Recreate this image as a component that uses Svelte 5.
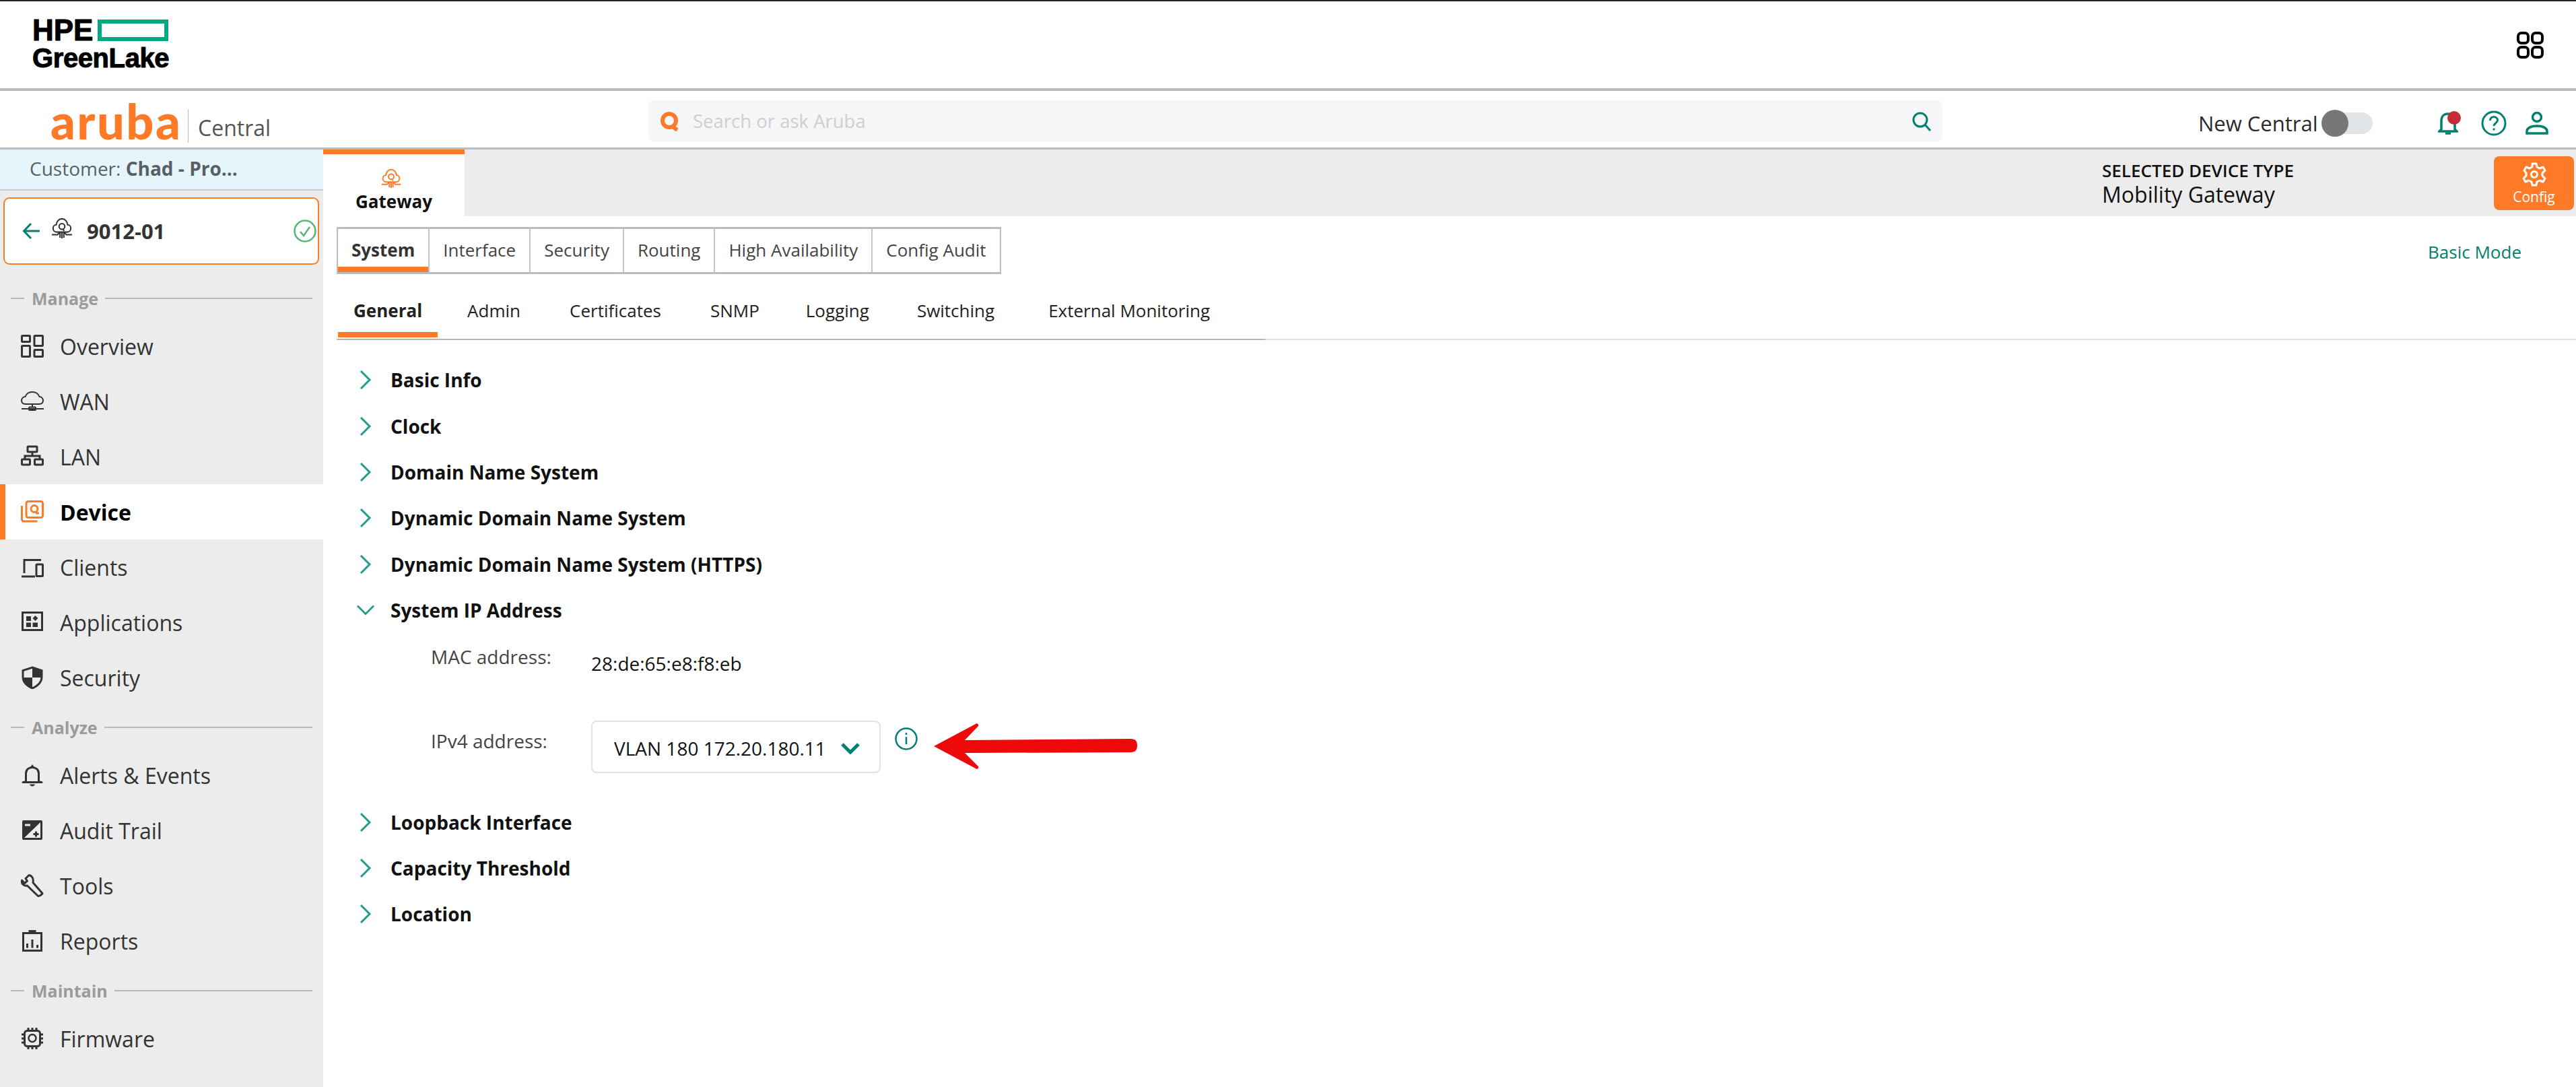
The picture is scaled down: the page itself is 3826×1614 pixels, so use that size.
<script>
  // stroke icons are drawn on a 34x34 box, colour comes from currentColor
  const nav = [
    { heading: 'Manage', items: [
      { label: 'Overview', icon: '<g fill="none" stroke="currentColor" stroke-width="3"><rect x="1.5" y="1.5" width="12" height="9" rx="1"/><rect x="20" y="1.5" width="12.5" height="15" rx="1"/><rect x="1.5" y="16.5" width="12" height="16" rx="1"/><rect x="20" y="22.5" width="12.5" height="10" rx="1"/></g>' },
      { label: 'WAN', icon: '<g fill="none" stroke="currentColor" stroke-width="2"><path d="M7 21C3 21 1 18.5 1 15.5S3.5 10 6.5 10C8 6 12 3 17 3s9 3 10.500 7c3 0 5.500 2.500 5.500 5.500S31 21 27 21Z"/><path d="M17 21v4M1 28h33"/><rect x="12" y="25.500" width="10" height="4.500" rx="1"/></g>' },
      { label: 'LAN', icon: '<g fill="none" stroke="currentColor" stroke-width="3"><rect x="10" y="2" width="14" height="8" rx="1"/><path d="M17 10v6M6 20v-4h22v4"/><rect x="1.500" y="21" width="12" height="8" rx="1"/><rect x="20.500" y="21" width="12" height="8" rx="1"/></g>' },
      { label: 'Device', active: true, icon: '<g fill="none" stroke="#ff7a26" stroke-width="3"><rect x="8" y="1.500" width="24.500" height="24" rx="3"/><circle cx="20" cy="12.500" r="5"/><path d="M22 19h5M1.500 8v20a3 3 0 0 0 3 3h20"/></g>' },
      { label: 'Clients', icon: '<g fill="none" stroke="currentColor" stroke-width="3"><path d="M5 26V6.500h25M1 31h20"/><rect x="23" y="13" width="9.500" height="17.500" rx="1"/></g>' },
      { label: 'Applications', icon: '<rect x="2.500" y="2.500" width="29" height="26" fill="none" stroke="currentColor" stroke-width="3"/><path fill="currentColor" d="M8 8h7v7H8zM8 17.500h7V24H8zM17.500 17.500H25V24h-7.500zM21.500 7l4 4-4 4-4-4z"/>' },
      { label: 'Security', icon: '<path fill="none" stroke="currentColor" stroke-width="3" d="M17 2 31 6.500V16c0 8-6 13.500-14 17C9 29.500 3 24 3 16V6.500Z"/><path fill="currentColor" d="M17 2 31 6.500V17H17ZM17 17H3c1 8 6 13 14 16Z"/>' }
    ] },
    { heading: 'Analyze', items: [
      { label: 'Alerts & Events', icon: '<path fill="none" stroke="currentColor" stroke-width="3" d="M7.500 26V14.500C7.500 9 11.500 5.500 17 5.500S26.500 9 26.500 14.500V26"/><path fill="none" stroke="currentColor" stroke-width="3" stroke-linecap="round" d="M3 27.500c2.500 0 4.500-1 4.500-3M31 27.500c-2.500 0-4.500-1-4.500-3M3 27.500h28"/><path fill="currentColor" d="M14 5l3-4 3 4zM13 30.500h8c0 1.500-2 3-4 3s-4-1.500-4-3z"/>' },
      { label: 'Audit Trail', icon: '<path fill="currentColor" fill-rule="evenodd" d="M4 2h26a2 2 0 0 1 2 2v25a2 2 0 0 1-2 2H4a2 2 0 0 1-2-2V4a2 2 0 0 1 2-2Zm25 3L5 28h24ZM6 7.500v3h8v-3Z"/><path stroke="currentColor" stroke-width="3" d="M22.500 18.500v8M18.500 22.500h8"/>' },
      { label: 'Tools', icon: '<path fill="none" stroke="currentColor" stroke-width="3" stroke-linejoin="round" d="M12 1.500 7 6.500l2.500 3.500-4 3.500L1.500 9C.500 14 4 18 9.500 17L25 32c2 1.500 6-1.500 7-3.500L18 12.500C19 7 17 2.500 12 1.500Z"/>' },
      { label: 'Reports', icon: '<path fill="none" stroke="currentColor" stroke-width="3" d="M3.500 5.500h27v26h-27ZM13 5.500V2.500h8v3"/><path fill="currentColor" d="M8 21h3v6.500H8zM15.500 15h3v12.500h-3zM23 23h3v4.500h-3z"/>' }
    ] },
    { heading: 'Maintain', items: [
      { label: 'Firmware', icon: '<rect x="5.500" y="5.500" width="23" height="23" rx="4" fill="none" stroke="currentColor" stroke-width="3"/><circle cx="17" cy="16.500" r="5.500" fill="none" stroke="currentColor" stroke-width="2.500"/><path stroke="currentColor" stroke-width="3" d="M11 1v4M17 1v4M23 1v4M11 29v4M17 29v4M23 29v4M1 11h4M1 17h4M1 23h4M29 11h4M29 17h4M29 23h4"/>' }
    ] }
  ];

  const subTabs = ['System', 'Interface', 'Security', 'Routing', 'High Availability', 'Config Audit'];
  const tabs = ['General', 'Admin', 'Certificates', 'SNMP', 'Logging', 'Switching', 'External Monitoring'];
  const sectionsBefore = ['Basic Info', 'Clock', 'Domain Name System', 'Dynamic Domain Name System', 'Dynamic Domain Name System (HTTPS)'];
  const sectionsAfter = ['Loopback Interface', 'Capacity Threshold', 'Location'];
</script>

{#snippet gatewayIcon(size)}
  <svg width={size} height={size} viewBox="0 0 34 34" fill="none" stroke="currentColor" stroke-width="2.200">
    <path d="M9 23C5 23 3 20 3 17s2-5.500 5-5.500C8.500 6.500 12 2 17 2s8.500 4.500 9 9.500c3 0 5 2.500 5 5.500s-2 6-6 6Z" />
    <circle cx="17" cy="14" r="4.500" />
    <path d="M19 19l1.500 2M14 23v9M17 23v10M20 23v9M1 27h9l3-3M33 27h-9l-3-3" />
  </svg>
{/snippet}

{#snippet chevronRight()}
  <svg class="chev" width="26" height="30" viewBox="0 0 26 30" fill="none" stroke="#1f9e8f" stroke-width="3"><path d="M6 2l13 13L6 28" /></svg>
{/snippet}

<div class="page">
  <header class="greenlake">
    <div class="hpe">
      <div class="hpe-top"><span>HPE</span><i class="hpe-box"></i></div>
      <div class="hpe-name">GreenLake</div>
    </div>
    <svg class="apps" width="40" height="40" viewBox="0 0 40 40" fill="none" stroke="#000" stroke-width="4">
      <rect x="2" y="2" width="15" height="15" rx="5" />
      <rect x="23" y="2" width="15" height="15" rx="5" />
      <rect x="2" y="23" width="15" height="15" rx="5" />
      <rect x="23" y="23" width="15" height="15" rx="5" />
    </svg>
  </header>

  <div class="central-bar">
    <div class="brand">
      <span class="aruba">aruba</span>
      <span class="central">Central</span>
    </div>
    <div class="search">
      <svg width="28" height="30" viewBox="0 0 28 30" fill="none" stroke="#ff7a26" stroke-width="6"><circle cx="14" cy="14" r="10" /><path d="M20 24l6 4" /></svg>
      <span class="placeholder">Search or ask Aruba</span>
      <svg class="search-go" width="30" height="30" viewBox="0 0 30 30" fill="none" stroke="#00806f" stroke-width="3"><circle cx="13" cy="13" r="10" /><path d="M20 20l8 9" /></svg>
    </div>
    <div class="top-right">
      <span class="new-central">New Central</span>
      <span class="toggle"><i></i></span>
      <span class="bell">
        <svg width="30" height="36" viewBox="0 0 30 36" fill="none" stroke="#00806f" stroke-width="3.500"><path d="M5 27V14C5 8 9 4 15 4s10 4 10 10v13l3 3H2Z" /><path d="M11 33h8" /></svg>
        <i class="dot"></i>
      </span>
      <svg class="help" width="38" height="38" viewBox="0 0 38 38" fill="none" stroke="#00806f" stroke-width="3"><circle cx="19" cy="19" r="17" /><path d="M13.500 15c0-3.500 2.500-5.500 5.500-5.500s5.500 2 5.500 5c0 4-5.500 4.500-5.500 8.500" /><path d="M19 26.500v3" /></svg>
      <svg class="user" width="34" height="34" viewBox="0 0 34 34" fill="none" stroke="#00806f" stroke-width="3.500"><circle cx="17" cy="8" r="6.500" /><path d="M2 32v-3c0-5 6-8 15-8s15 3 15 8v3Z" /></svg>
    </div>
  </div>

  <div class="body">
    <aside class="sidebar">
      <div class="customer">Customer: <strong>Chad - Pro...</strong></div>
      <div class="device-card">
        <svg width="28" height="26" viewBox="0 0 28 26" fill="none" stroke="#00806f" stroke-width="3"><path d="M26 13H3M13 2 2.500 13 13 24" /></svg>
        <span class="device-icon">{@render gatewayIcon(32)}</span>
        <span class="device-name">9012-01</span>
        <svg class="ok" width="34" height="34" viewBox="0 0 34 34" fill="none" stroke="#55b776" stroke-width="2.500"><circle cx="17" cy="17" r="15.500" /><path d="M10 18l5 6 9-13" /></svg>
      </div>

      {#each nav as group}
        <div class="nav-heading"><i></i><span>{group.heading}</span><b></b></div>
        {#each group.items as item}
          <div class="nav-item" class:active={item.active}>
            <svg width="34" height="34" viewBox="0 0 34 34">{@html item.icon}</svg>
            <span>{item.label}</span>
          </div>
        {/each}
      {/each}
    </aside>

    <main class="content">
      <div class="type-bar">
        <div class="type-tab">
          <span class="type-icon">{@render gatewayIcon(30)}</span>
          <span>Gateway</span>
        </div>
        <div class="selected">
          <strong>SELECTED DEVICE TYPE</strong>
          <span>Mobility Gateway</span>
        </div>
        <div class="config">
          <svg width="36" height="36" viewBox="0 0 36 36" fill="none" stroke="#fff" stroke-width="3" stroke-linejoin="round"><path d="M15 2h6l1 5 4 2 5-2 3 5-4 4v4l4 4-3 5-5-2-4 2-1 5h-6l-1-5-4-2-5 2-3-5 4-4v-4L3 12l3-5 5 2 4-2Z" /><circle cx="18" cy="18" r="4.500" /></svg>
          <span>Config</span>
        </div>
      </div>

      <div class="sub-row">
        <div class="sub-tabs">
          {#each subTabs as tab, i}
            <div class="sub-tab" class:on={i === 0}>{tab}</div>
          {/each}
        </div>
        <span class="basic-mode">Basic Mode</span>
      </div>

      <div class="tabs-wrap">
        <div class="tabs">
          {#each tabs as tab, i}
            <div class="tab" class:on={i === 0}>{tab}</div>
          {/each}
        </div>
      </div>

      <div class="sections">
        {#each sectionsBefore as title}
          <div class="section">{@render chevronRight()}<span>{title}</span></div>
        {/each}
        <div class="section">
          <svg class="chev" width="28" height="26" viewBox="0 0 28 26" fill="none" stroke="#1f9e8f" stroke-width="3"><path d="M1 6l13 13L27 6" /></svg>
          <span>System IP Address</span>
        </div>
        <div class="details">
          <div class="field mac">
            <label for="mac">MAC address:</label>
            <span id="mac">28:de:65:e8:f8:eb</span>
          </div>
          <div class="field ip">
            <label for="ip">IPv4 address:</label>
            <div id="ip" class="select">
              <span>VLAN 180 172.20.180.11</span>
              <svg width="30" height="18" viewBox="0 0 30 18" fill="none" stroke="#00806f" stroke-width="5"><path d="M3 3l12 12L27 3" /></svg>
            </div>
            <svg class="info" width="34" height="34" viewBox="0 0 34 34" fill="none" stroke="#00806f" stroke-width="2.500"><circle cx="17" cy="17" r="15.500" /><path d="M17 14v11M17 8v3" /></svg>
            <svg class="arrow" width="304" height="72" viewBox="0 0 304 72"><path fill="#ee0a0a" d="M1 36 63 3c2-2 5 0 4 3L47 27l246-2c8 0 10 4 10 10s-2 10-10 10L47 46l20 20c1 3-2 5-4 3Z" /></svg>
          </div>
        </div>
        {#each sectionsAfter as title}
          <div class="section">{@render chevronRight()}<span>{title}</span></div>
        {/each}
      </div>
    </main>
  </div>
</div>

<style>
  :global(body) {
    margin: 0;
    background: #fff;
    font-family: "Open Sans", "Noto Sans", sans-serif;
  }

  .page {
    width: 3826px;
    height: 1614px;
    overflow: hidden;
    color: #2b2b2b;
    border-top: 2px solid #222;
    box-sizing: border-box;
  }

  .greenlake {
    height: 129px;
    box-sizing: content-box;
    display: flex;
    align-items: center;
    justify-content: space-between;
    padding: 0 48px;
    border-bottom: 4px solid #b9b9b9;
  }

  .hpe {
    font-family: "Liberation Sans", sans-serif;
    font-weight: 700;
    color: #000;
    width: 202px;
    margin-top: -1px;
    -webkit-text-stroke: 1px #000;
  }

  .hpe-top {
    display: flex;
    align-items: center;
    gap: 7px;
    height: 32px;
    font-size: 44px;
    line-height: 32px;
  }

  .hpe-box {
    flex: 1;
    height: 32px;
    box-sizing: border-box;
    border: 6px solid #01a982;
  }

  .hpe-name {
    font-size: 40px;
    line-height: 34px;
    margin-top: 8px;
    letter-spacing: -0.4px;
  }

  .central-bar {
    height: 84px;
    border-bottom: 3px solid #b9bdc1;
    display: flex;
    align-items: center;
  }

  .brand {
    width: 963px;
    flex: none;
    display: flex;
    align-items: flex-end;
    padding-left: 75px;
    box-sizing: border-box;
    height: 100%;
  }

  .aruba {
    width: 192px;
    font-family: Lato, sans-serif;
    font-weight: 900;
    font-size: 72px;
    line-height: 76px;
    margin-bottom: 2px;
    letter-spacing: 2.500px;
    color: #ff7a26;
  }

  .central {
    font-size: 32px;
    line-height: 44px;
    margin: 0 0 7px 12px;
    padding: 6px 0 0 14px;
    border-left: 1px solid #bbb;
    color: #555;
  }

  .search {
    width: 1922px;
    height: 61px;
    margin-top: 5px;
    flex: none;
    background: #f5f6f8;
    border-radius: 8px;
    display: flex;
    align-items: center;
    padding: 0 16px 0 17px;
    box-sizing: border-box;
    gap: 21px;
  }

  .placeholder {
    font-size: 27.5px;
    color: #cdcfd1;
  }

  .search-go {
    margin-left: auto;
  }

  .top-right {
    flex: 1;
    display: flex;
    align-items: center;
    height: 100%;
    padding: 12px 0 0 380px;
    box-sizing: border-box;
  }

  .new-central {
    font-size: 31px;
  }

  .toggle {
    width: 76px;
    height: 32px;
    margin-left: 5px;
    border-radius: 16px;
    background: #e2e5e8;
    position: relative;
  }

  .toggle i {
    position: absolute;
    left: 0;
    top: -4px;
    width: 40px;
    height: 40px;
    border-radius: 50%;
    background: #777;
  }

  .bell {
    margin-left: 97px;
    width: 30px;
    height: 36px;
    position: relative;
  }

  .dot {
    position: absolute;
    right: -4px;
    top: 0;
    width: 20px;
    height: 20px;
    border-radius: 50%;
    background: #c42c37;
  }

  .help {
    margin-left: 34px;
  }

  .user {
    margin-left: 28px;
  }

  .body {
    display: flex;
    height: 1392px;
  }

  .sidebar {
    width: 480px;
    flex: none;
    background: #ececec;
  }

  .customer {
    height: 59px;
    line-height: 56px;
    padding-left: 44px;
    font-size: 28px;
    color: #585f66;
    background: #e6f5fb;
    border-bottom: 2px solid #c2ced4;
  }

  .customer strong {
    font-weight: 700;
  }

  .device-card {
    margin: 10px 6px 0 5px;
    height: 100px;
    box-sizing: border-box;
    border: 2.500px solid #ff7a26;
    border-radius: 9px;
    background: #fff;
    display: flex;
    align-items: center;
    padding: 0 2px 0 26px;
    color: #333;
  }

  .device-icon {
    margin-left: 15px;
    display: flex;
    margin-top: -8px;
  }

  .device-name {
    font-size: 31px;
    font-weight: 700;
    margin-left: 21px;
  }

  .ok {
    margin-left: auto;
  }

  .nav-heading {
    display: flex;
    align-items: center;
    height: 36px;
    padding: 0 16px;
    margin-top: 32px;
    font-size: 25px;
    font-weight: 700;
    color: #9b9b9b;
  }

  .nav-item + .nav-heading {
    margin-top: 15px;
  }

  .nav-heading i {
    width: 20px;
    height: 2px;
    background: #b5b8bb;
  }

  .nav-heading span {
    margin: 0 10px 0 11px;
  }

  .nav-heading b {
    flex: 1;
    height: 2px;
    background: #b5b8bb;
  }

  .nav-heading + .nav-item {
    margin-top: 12px;
  }

  .nav-item {
    height: 82px;
    display: flex;
    align-items: center;
    padding-left: 31px;
    gap: 24px;
    font-size: 32px;
    color: #333;
    box-sizing: border-box;
  }

  .nav-item.active {
    background: #fff;
    border-left: 8px solid #ff7a26;
    padding-left: 23px;
    font-weight: 700;
    color: #000;
  }

  .content {
    flex: 1;
    min-width: 0;
  }

  .type-bar {
    height: 99px;
    background: #ececec;
    display: flex;
    align-items: center;
  }

  .type-tab {
    width: 210px;
    height: 99px;
    box-sizing: border-box;
    background: #fff;
    border-top: 7px solid #ff7a26;
    display: flex;
    flex-direction: column;
    align-items: center;
    font-size: 26px;
    font-weight: 700;
    color: #111;
    line-height: 36px;
    padding-top: 21px;
  }

  .type-icon {
    color: #ff7a26;
    display: flex;
    margin-bottom: 1px;
    margin-left: -8px;
  }

  .selected {
    margin-left: auto;
    display: flex;
    flex-direction: column;
    color: #111;
    margin-top: 0;
  }

  .selected strong {
    font-size: 26px;
    font-weight: 600;
    line-height: 34px;
  }

  .selected span {
    font-size: 32px;
    line-height: 38px;
  }

  .config {
    width: 119px;
    height: 80px;
    margin: 0 3px 0 297px;
    border-radius: 8px;
    background: #ff7a26;
    color: #fff;
    font-size: 21px;
    display: flex;
    flex-direction: column;
    align-items: center;
    padding-top: 9px;
    box-sizing: border-box;
    line-height: 30px;
  }

  .sub-row {
    display: flex;
    align-items: center;
    justify-content: space-between;
    margin-top: 16px;
    padding: 0 81px 0 20px;
  }

  .sub-tabs {
    display: flex;
    height: 70px;
    border: 2px solid #b9bdc1;
    border-top-width: 3px;
    border-bottom-width: 3px;
    box-sizing: border-box;
  }

  .sub-tab {
    font-size: 26px;
    color: #444;
    display: flex;
    align-items: center;
    padding: 0 20px 2px;
    border-left: 2px solid #c4c7ca;
    box-sizing: border-box;
    height: 100%;
    white-space: nowrap;
  }

  .sub-tab:first-child {
    border-left: 0;
  }

  .sub-tab.on {
    font-weight: 700;
    color: #333;
    border-bottom: 8px solid #ff7a26;
    padding-bottom: 0;
    align-items: flex-start;
    padding-top: 13px;
  }

  .basic-mode {
    font-size: 26px;
    color: #00806f;
    margin-top: 4px;
  }

  .tabs-wrap {
    margin: 24px 0 0 20px;
    height: 74px;
    box-sizing: border-box;
    border-bottom: 2px solid #e0e0e0;
  }

  .tabs {
    display: flex;
    width: 1379px;
    height: 74px;
    box-sizing: border-box;
    border-bottom: 2px solid #b5b9bc;
    padding-left: 2px;
    gap: 25px;
  }

  .tab {
    height: 70px;
    padding: 0 23px;
    font-size: 26px;
    line-height: 60px;
    color: #222;
    box-sizing: border-box;
    white-space: nowrap;
  }

  .tab.on {
    font-weight: 700;
    border-bottom: 8px solid #ff7a26;
  }

  /* the real tabs aren't evenly spaced */
  .tab:nth-child(2) { margin-left: -4px; }
  .tab:nth-child(3) { margin-left: 2px; }
  .tab:nth-child(4) { margin-left: 2px; }
  .tab:nth-child(5) { margin-left: -2px; }
  .tab:nth-child(7) { margin-left: 9px; }

  .sections {
    padding: 25px 0 0 50px;
  }

  .section {
    height: 68.400px;
    display: flex;
    align-items: center;
    gap: 24px;
    font-size: 28px;
    font-weight: 700;
    color: #111;
  }

  .chev {
    width: 26px;
    flex: none;
  }

  .details {
    height: 246px;
    padding-left: 110px;
    box-sizing: border-box;
    font-size: 28px;
  }

  .field {
    display: flex;
  }

  .field label {
    width: 238px;
    color: #444;
  }

  .mac {
    height: 130px;
    align-items: flex-start;
    padding-top: 16px;
    box-sizing: border-box;
  }

  .mac span {
    margin-top: 10px;
    color: #111;
  }

  .ip {
    align-items: flex-start;
  }

  .ip label {
    margin-top: 11px;
  }

  .select {
    width: 430px;
    height: 78px;
    box-sizing: border-box;
    border: 2px solid #e2e2e2;
    border-radius: 8px;
    display: flex;
    align-items: center;
    justify-content: space-between;
    padding: 4px 28px 0 32px;
    color: #111;
    white-space: nowrap;
  }

  .info {
    margin: 10px 0 0 21px;
  }

  .arrow {
    margin: 2px 0 0 23px;
  }
</style>
